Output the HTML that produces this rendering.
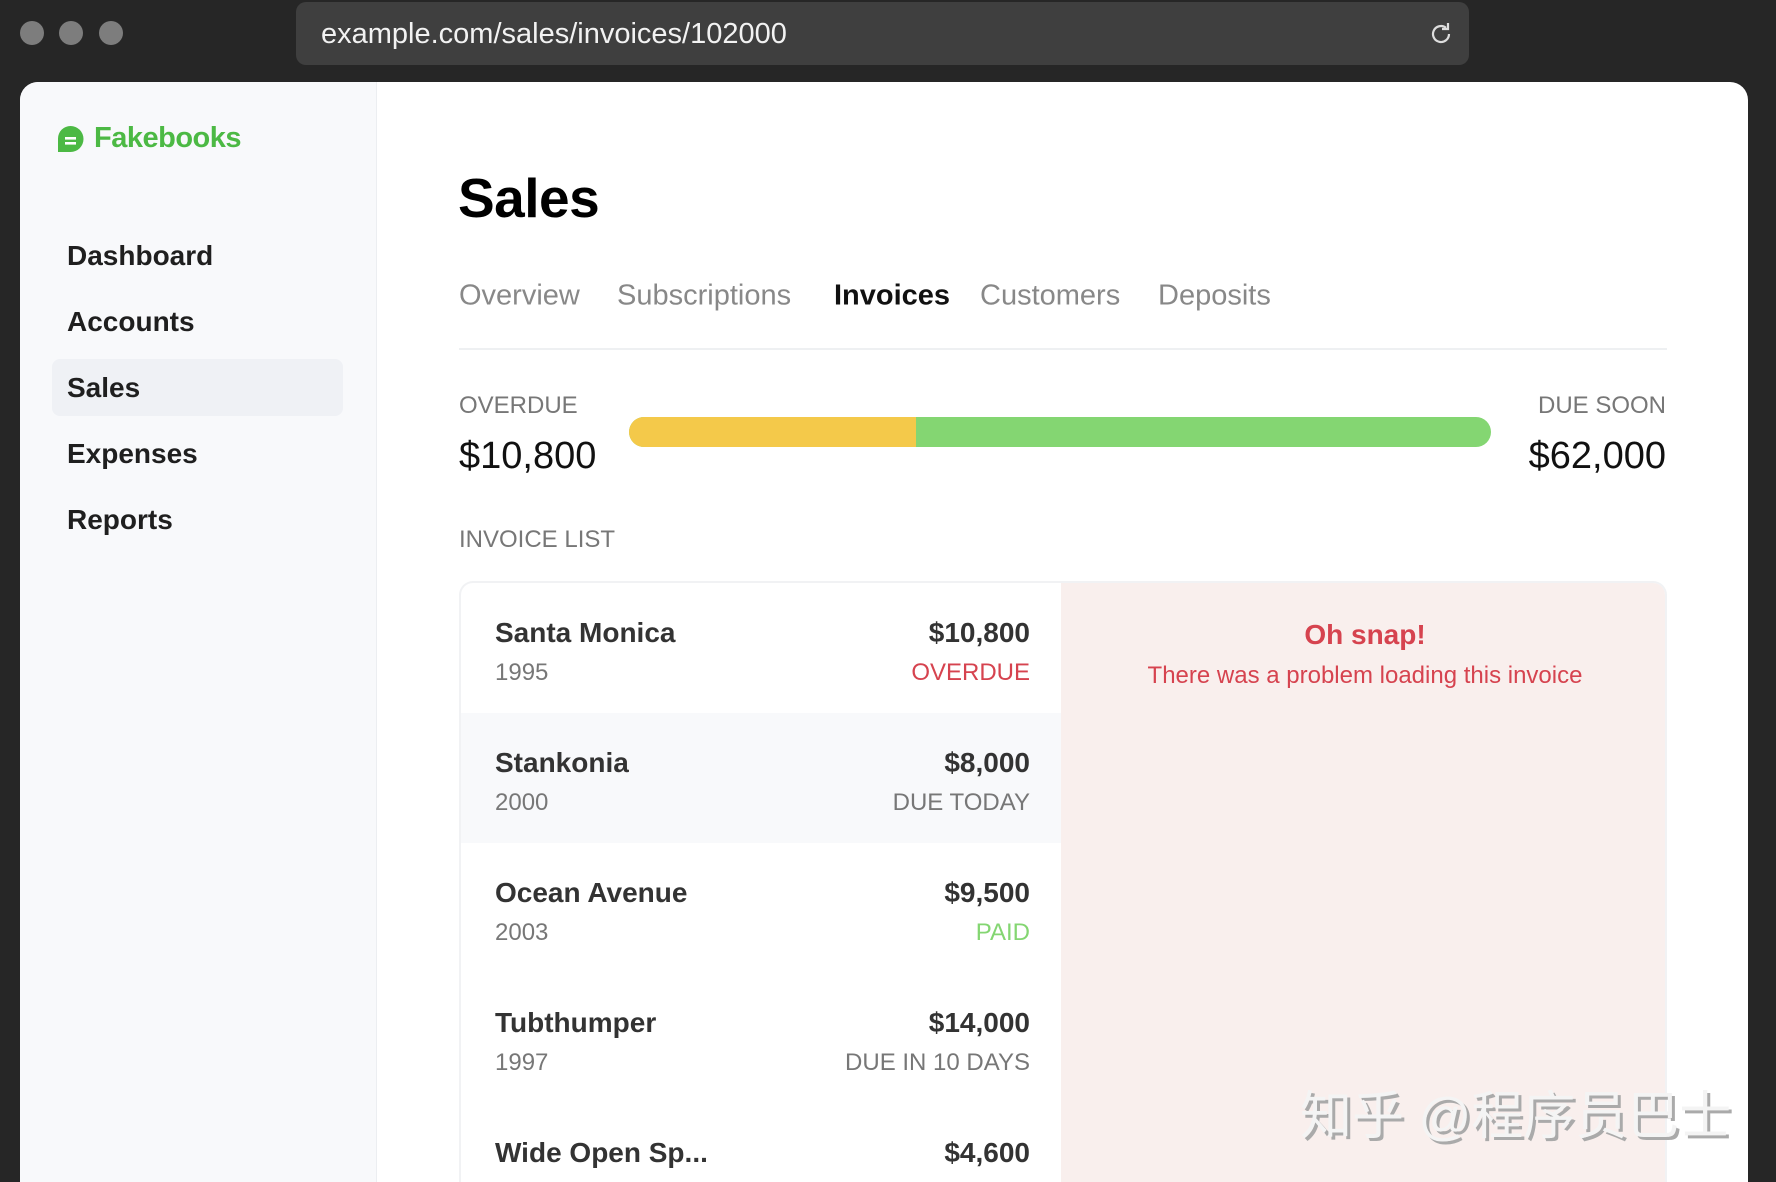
<!DOCTYPE html>
<html style="overflow:hidden;height:1182px"><head><meta charset="utf-8"><style>
*{margin:0;padding:0;box-sizing:border-box}
body{width:1776px;height:1182px;background:#262626;font-family:"Liberation Sans",sans-serif;position:relative;overflow:hidden}
.a{position:absolute;white-space:nowrap}
.dot{position:absolute;width:24px;height:24px;border-radius:50%;background:#7d7d7d;top:21px}
.nav{position:absolute;left:67px;font-size:28px;font-weight:bold;color:#1f1f1f;transform:translateY(-50%)}
.tab{position:absolute;top:296px;transform:translateY(-50%);font-size:29px;color:#888}
.row{position:absolute;left:0;width:601px;height:130px}
.nm{position:absolute;left:34px;top:34px;font-size:28px;font-weight:bold;color:#333}
.yr{position:absolute;left:34px;top:76px;font-size:24px;color:#777}
.am{position:absolute;right:32px;top:34px;font-size:28px;font-weight:bold;color:#333}
.st{position:absolute;right:32px;top:76px;font-size:24px;color:#777}
</style></head><body>
<div class="dot" style="left:20px"></div><div class="dot" style="left:59px"></div><div class="dot" style="left:99px"></div>
<div class="a" style="left:296px;top:2px;width:1173px;height:63px;background:#3f3f3f;border-radius:10px"></div>
<div class="a" style="left:321px;top:18px;font-size:29px;color:#f2f2f2">example.com/sales/invoices/102000</div>
<svg class="a" style="left:1428px;top:21px" width="26" height="26" viewBox="0 0 26 26"><path d="M21 13a8 8 0 1 1-3-6.2" fill="none" stroke="#ddd" stroke-width="2.2"/><path d="M14 6h6V0" fill="none" stroke="#ddd" stroke-width="2.2" transform="translate(0,2)"/></svg>
<div class="a" style="left:20px;top:82px;width:1728px;height:1100px;background:#fff;border-radius:18px 18px 0 0;overflow:hidden">
 <div class="a" style="left:0;top:0;width:357px;height:1100px;background:#f8f9fb;border-right:1px solid #eceef1"></div>
</div>
<svg class="a" style="left:57px;top:125px" width="27" height="28" viewBox="0 0 27 28"><path d="M13.5 1a12.5 12.5 0 0 0-12.5 12.5V27h12.5a12.5 12.5 0 0 0 0-26z" fill="#4cb944"/><rect x="8" y="12" width="11" height="2.6" fill="#fff"/><rect x="8" y="17" width="11" height="2.6" fill="#fff"/></svg>
<div class="a" style="left:94px;top:122px;font-size:29px;font-weight:bold;color:#4cb944;letter-spacing:-0.5px">Fakebooks</div>
<div class="a" style="left:52px;top:359px;width:291px;height:57px;background:#eff1f5;border-radius:8px"></div>
<div class="nav" style="top:256px">Dashboard</div>
<div class="nav" style="top:322px">Accounts</div>
<div class="nav" style="top:388px">Sales</div>
<div class="nav" style="top:454px">Expenses</div>
<div class="nav" style="top:520px">Reports</div>
<div class="a" style="left:458px;top:166px;font-size:55px;font-weight:900;color:#000;letter-spacing:-0.5px">Sales</div>
<div class="tab" style="left:459px">Overview</div>
<div class="tab" style="left:617px">Subscriptions</div>
<div class="tab" style="left:834px;color:#111;font-weight:bold">Invoices</div>
<div class="tab" style="left:980px">Customers</div>
<div class="tab" style="left:1158px">Deposits</div>
<div class="a" style="left:459px;top:348px;width:1208px;height:2px;background:#eef0f2"></div>
<div class="a" style="left:459px;top:392px;font-size:24px;color:#777">OVERDUE</div>
<div class="a" style="left:459px;top:435px;font-size:38px;color:#111">$10,800</div>
<div class="a" style="right:110px;top:392px;font-size:24px;color:#777">DUE SOON</div>
<div class="a" style="right:110px;top:435px;font-size:38px;color:#111">$62,000</div>
<div class="a" style="left:629px;top:417px;width:862px;height:30px;border-radius:15px;background:#84d672;overflow:hidden"><div style="width:287px;height:30px;background:#f4c94a"></div></div>
<div class="a" style="left:459px;top:526px;font-size:24px;color:#777">INVOICE LIST</div>
<div class="a" style="left:459px;top:581px;width:1208px;height:601px;border:2px solid #f1f2f4;border-bottom:0;border-radius:14px 14px 0 0;overflow:hidden;background:#fff">
 <div class="row" style="top:0"><div class="nm">Santa Monica</div><div class="yr">1995</div><div class="am">$10,800</div><div class="st" style="color:#d6434f">OVERDUE</div></div>
 <div class="row" style="top:130px;background:#f8f9fb"><div class="nm">Stankonia</div><div class="yr">2000</div><div class="am">$8,000</div><div class="st">DUE TODAY</div></div>
 <div class="row" style="top:260px"><div class="nm">Ocean Avenue</div><div class="yr">2003</div><div class="am">$9,500</div><div class="st" style="color:#84d672">PAID</div></div>
 <div class="row" style="top:390px"><div class="nm">Tubthumper</div><div class="yr">1997</div><div class="am">$14,000</div><div class="st">DUE IN 10 DAYS</div></div>
 <div class="row" style="top:520px"><div class="nm">Wide Open Sp...</div><div class="yr">1998</div><div class="am">$4,600</div><div class="st">DUE IN 8 DAYS</div></div>
 <div class="a" style="left:600px;top:0;width:608px;height:601px;background:#f9efed"></div>
 <div class="a" style="left:600px;width:608px;top:36px;text-align:center;font-size:28px;font-weight:bold;color:#d6434f">Oh snap!</div>
 <div class="a" style="left:600px;width:608px;top:79px;text-align:center;font-size:24px;color:#d6434f">There was a problem loading this invoice</div>
</div>
<div class="a" style="left:1300px;top:1074px;font-size:52px;color:#f4f4f4;text-shadow:3px 3px 0 #aaa;font-family:'Liberation Sans','Noto Sans CJK SC',sans-serif">知乎 @程序员巴士</div>
</body></html>
